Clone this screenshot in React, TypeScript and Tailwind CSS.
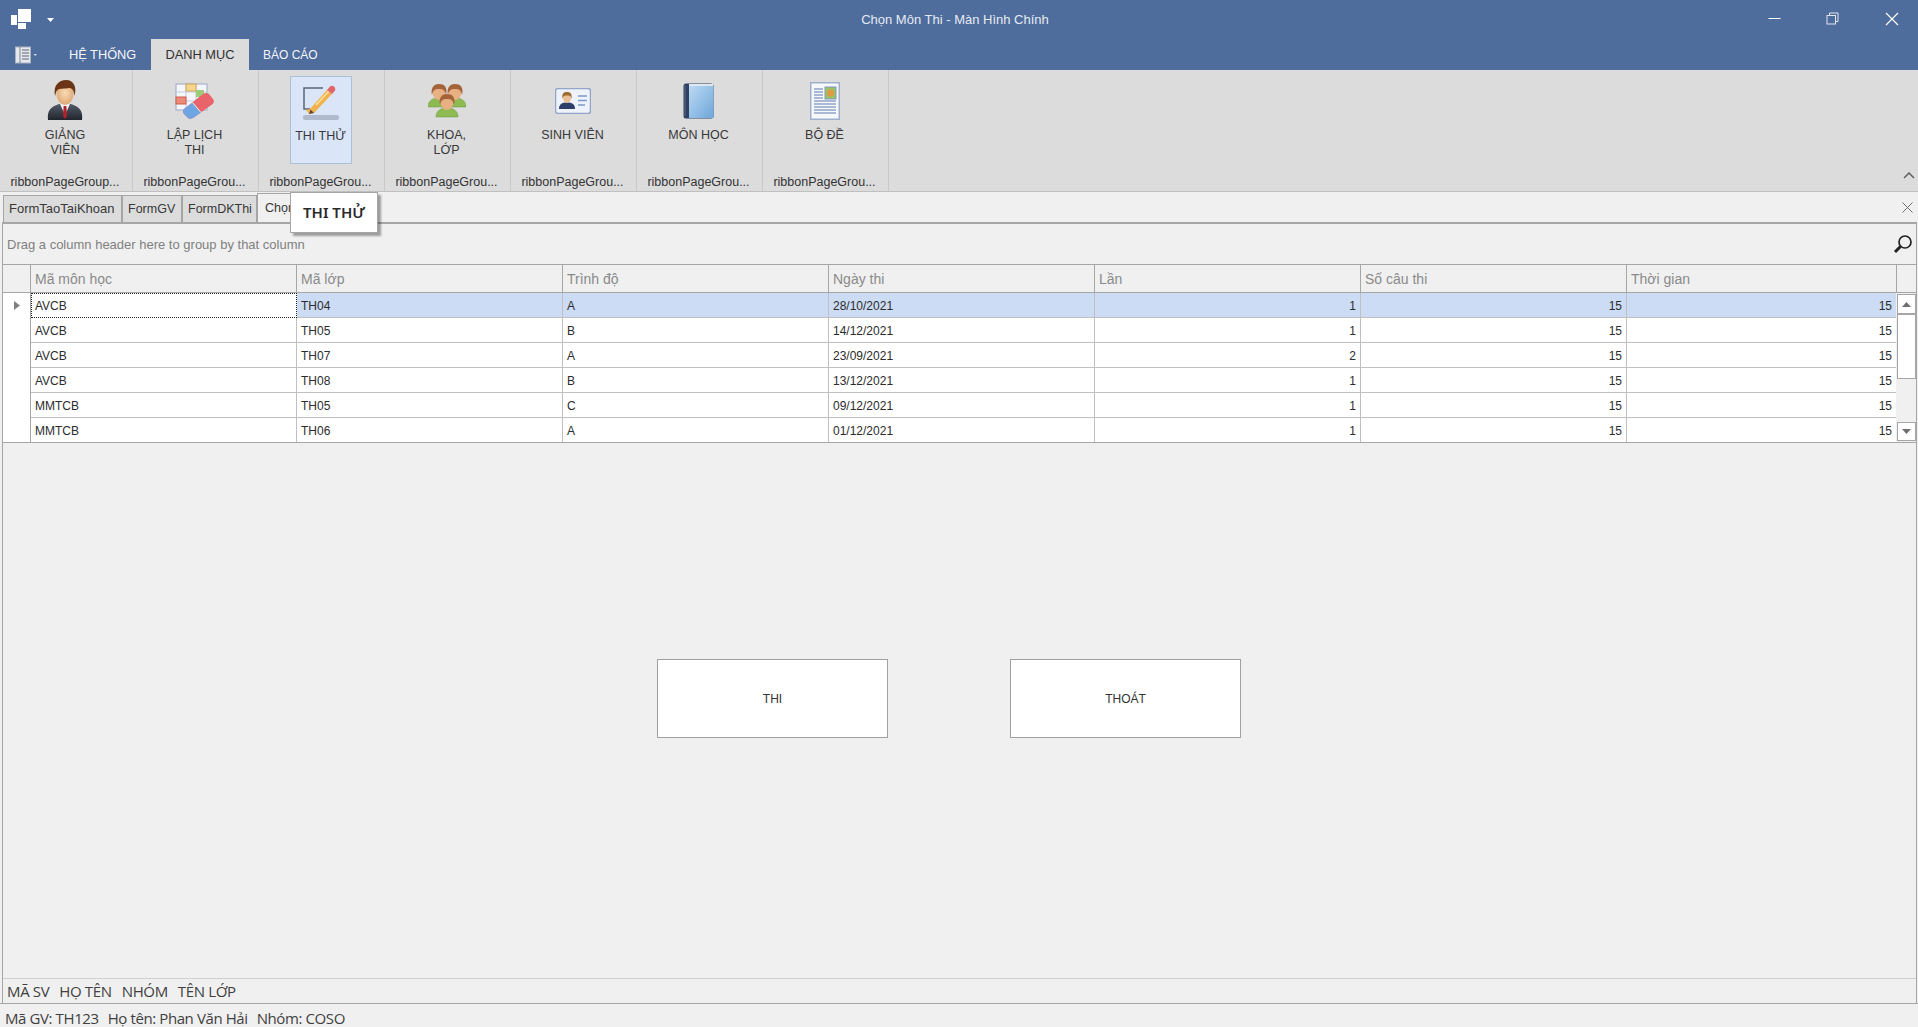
import { ReactNode } from "react";

const sans = "[font-family:'Liberation_Sans',sans-serif]";

const columns = ["Mã môn học", "Mã lớp", "Trình độ", "Ngày thi", "Lần", "Số câu thi", "Thời gian"];

const rows = [
  ["AVCB", "TH04", "A", "28/10/2021", "1", "15", "15"],
  ["AVCB", "TH05", "B", "14/12/2021", "1", "15", "15"],
  ["AVCB", "TH07", "A", "23/09/2021", "2", "15", "15"],
  ["AVCB", "TH08", "B", "13/12/2021", "1", "15", "15"],
  ["MMTCB", "TH05", "C", "09/12/2021", "1", "15", "15"],
  ["MMTCB", "TH06", "A", "01/12/2021", "1", "15", "15"],
];

function TeacherIcon() {
  return (
    <svg width="36" height="42" viewBox="0 0 36 42">
      <defs>
        <linearGradient id="suit" x1="0" y1="0" x2="0" y2="1">
          <stop offset="0" stopColor="#545c6a" />
          <stop offset="1" stopColor="#20242c" />
        </linearGradient>
        <radialGradient id="face" cx="0.5" cy="0.45" r="0.6">
          <stop offset="0" stopColor="#fbdcb4" />
          <stop offset="1" stopColor="#dba26e" />
        </radialGradient>
      </defs>
      <path d="M1 40 C0 31 3 27 12 24 L24 24 C33 27 36 31 35 40 Z" fill="url(#suit)" />
      <path d="M13 24 L18 35 L23 24 Z" fill="#f3f3f3" />
      <path d="M16.600 26 H19.400 L20 36 L18 39 L16 36 Z" fill="#b3202a" />
      <ellipse cx="18" cy="14" rx="8.500" ry="11" fill="url(#face)" />
      <path d="M8 16 C6 5 12 0 19 0 C27 0 30 7 27.500 16 C27 10 25 8 22 8 C18 9 12 8 10.500 10 C9 11 9 13 8 16 Z" fill="#6b3416" />
    </svg>
  );
}

function ScheduleIcon() {
  return (
    <svg width="40" height="36" viewBox="0 0 40 36">
      <rect x="1" y="1" width="31" height="26" fill="#f4f6fb" stroke="#9aa8c4" />
      <path d="M1 9 H32 M1 18 H32 M11 1 V27 M21 1 V27" stroke="#c3cde0" />
      <rect x="11" y="1" width="10" height="7" fill="#f6d58c" stroke="#d2a65a" />
      <rect x="1" y="14" width="10" height="7" fill="#ee8a78" stroke="#c9604f" />
      <rect x="21" y="7" width="8" height="7" fill="#9ccc7a" />
      <path d="M9 26 L28 11 C30 9.500 32 9.500 34 11 L38 16 C39.500 18 39 20 37 21.500 L18 35 C16 36 14 36 13 35 L9 31 C7.500 29 7.500 27.500 9 26 Z" fill="#e9646a" />
      <path d="M9 26 L17.500 19.500 L26 29.500 L18 35 C16 36 14 36 13 35 L9 31 C7.500 29 7.500 27.500 9 26 Z" fill="#6ea4e2" />
      <path d="M17.500 19.500 L26 29.500" stroke="#f2f2f2" strokeWidth="1" />
    </svg>
  );
}

function ExamIcon() {
  return (
    <svg width="38" height="38" viewBox="0 0 38 38">
      <path d="M21 5 H2 V26 H8" fill="none" stroke="#5d6675" strokeWidth="1.500" />
      <path d="M4 27 L8 26 L25 7 L30 11 L12 30 L7 31 Z" fill="#f2b34c" />
      <path d="M14 22 L27 8" stroke="#fbe0a0" strokeWidth="1.500" />
      <path d="M25 7 L28 3.500 C29 2.500 30.500 2.500 32 3.500 C33.500 5 33.500 6.500 33 7.500 L30 11 Z" fill="#e0646a" />
      <path d="M7 31 L8.500 26.500 L12 30 Z" fill="#5a4a3a" />
      <rect x="1" y="32" width="36" height="5" rx="2" fill="#a4afc0" opacity="0.8" />
    </svg>
  );
}

function GroupIcon() {
  const person = (x: number, y: number) => (
    <g transform={`translate(${x} ${y})`}>
      <path d="M0 23 C0 17 4 15 8 14 H14 C18 15 22 17 22 23 Z" fill="#8dbb52" stroke="#6f9a3c" strokeWidth="0.500" />
      <ellipse cx="11" cy="8" rx="6.500" ry="8" fill="#e7b183" />
      <path d="M4 11 C2 3 7 0 11 0 C16 0 20 3 18 11 C17 6 15 5 11 5 C7 5 5 6 4 11 Z" fill="#a5633a" />
    </g>
  );
  return (
    <svg width="38" height="34" viewBox="0 0 38 34">
      {person(0, 0)}
      {person(16, 0)}
      {person(8, 10)}
    </svg>
  );
}

function StudentIcon() {
  return (
    <svg width="36" height="26" viewBox="0 0 36 26">
      <rect x="0.500" y="0.500" width="35" height="25" rx="2.500" fill="#eef2fa" stroke="#93a6c9" strokeWidth="1.500" />
      <path d="M4 21 C4 16 7 15 10 14.500 H14 C17 15 20 16 20 21 Z" fill="#2d3f68" />
      <ellipse cx="12" cy="10" rx="4" ry="5" fill="#ecc096" />
      <path d="M7.500 11 C6.500 5 9 4 12 4 C15 4 17.500 5 16.500 11 C16 8 15 7.500 12 7.500 C9 7.500 8 8 7.500 11 Z" fill="#9d6b2e" />
      <path d="M23 8 H32 M23 12.500 H32 M23 17 H30" stroke="#7d9bc9" strokeWidth="1.500" />
    </svg>
  );
}

function BookIcon() {
  return (
    <svg width="32" height="36" viewBox="0 0 32 36">
      <defs>
        <linearGradient id="cover" x1="0" y1="0" x2="1" y2="1">
          <stop offset="0" stopColor="#bcdaf3" />
          <stop offset="1" stopColor="#6ea6da" />
        </linearGradient>
      </defs>
      <rect x="0.500" y="0.500" width="30" height="35" rx="2.500" fill="#2f4060" />
      <rect x="6" y="3" width="24.500" height="32" fill="url(#cover)" />
      <path d="M6 2 H30" stroke="#dfe7f1" strokeWidth="2" />
      <path d="M2 2 V33" stroke="#59698a" strokeWidth="1" />
    </svg>
  );
}

function ExamSetIcon() {
  return (
    <svg width="30" height="38" viewBox="0 0 30 38">
      <rect x="0.750" y="0.750" width="28.500" height="36.500" fill="#f6f8fc" stroke="#9fb0cc" strokeWidth="1.500" />
      <path d="M4 7 H13 M4 10 H13 M4 13 H13 M4 16 H13 M4 19 H26 M4 22 H26 M4 25 H26 M4 28 H26 M4 31 H26" stroke="#8fa3c7" strokeWidth="1.500" />
      <rect x="15" y="5" width="11" height="12" fill="#9ac267" stroke="#8398bb" />
      <circle cx="20.500" cy="11" r="3.500" fill="#e09a3f" />
    </svg>
  );
}

function RibbonGroup({
  icon,
  label,
  caption,
  active,
  width = "w-[126px]",
}: {
  icon: ReactNode;
  label: string[];
  caption: string;
  active?: boolean;
  width?: string;
}) {
  return (
    <div className={`flex ${width} shrink-0 flex-col border-r border-[#c8c8c8] pr-[2px]`}>
      <div className="flex flex-1 justify-center pt-[6px]">
        <div
          className={`flex h-[88px] w-[62px] flex-col items-center ${
            active ? "border border-[#aebfd8] bg-[#dae6f8]" : ""
          }`}
        >
          <div className="flex h-[46px] w-full items-center justify-center pt-[4px]">{icon}</div>
          <div className="mt-[6px] whitespace-nowrap text-center text-[12.5px] leading-[15px] text-[#383838]">
            {label.map((l) => (
              <div key={l}>{l}</div>
            ))}
          </div>
        </div>
      </div>
      <div className="h-[20px] whitespace-nowrap text-center text-[12.5px] leading-[22px] text-[#333]">{caption}</div>
    </div>
  );
}

function Tab({ label, active, width, size = "text-[12.500px]" }: { label: string; active?: boolean; width: string; size?: string }) {
  return (
    <div
      className={`flex ${width} ${size} items-center border-r border-t border-l border-[#a6a6a6] text-[#383838] ${
        active ? "h-[29px] bg-[#f0f0f0] pl-[7px]" : "h-[27px] bg-[#dcdcdc] pl-[5px]"
      }`}
    >
      {label}
    </div>
  );
}

export default function App() {
  return (
    <div className={`relative flex h-screen w-full flex-col overflow-hidden bg-[#f0f0f0] ${sans}`}>
      {/* title bar */}
      <div className="grid h-[39px] shrink-0 grid-cols-[1fr_auto_1fr] items-center bg-[#4e6c9c] text-white">
        <div className="flex items-center pl-[11px]">
          <svg width="21" height="21" viewBox="0 0 21 21">
            <path d="M7 0 H20 V13 H7 Z M0 6 H6 V16 H0 Z M7 14 H15 V20 H7 Z" fill="#fff" />
          </svg>
          <svg className="ml-[15px] mt-[1px]" width="7" height="4" viewBox="0 0 7 4">
            <path d="M0 0 H7 L3.500 4 Z" fill="#fff" />
          </svg>
        </div>
        <div className="mr-[8px] text-[13px] text-[#e6ebf3]">Chọn Môn Thi - Màn Hình Chính</div>
        <div className="flex items-center justify-end pb-[2px] pr-[19px]">
          <svg width="13" height="13" viewBox="0 0 13 13">
            <path d="M0.500 6.500 H12.500" stroke="#fff" strokeWidth="1" />
          </svg>
          <svg className="ml-[45px]" width="13" height="13" viewBox="0 0 13 13" fill="none" stroke="#dfe6f0">
            <rect x="1" y="3.500" width="8.500" height="8.500" />
            <path d="M3.500 3.500 V1 H12 V9.500 H9.500" />
          </svg>
          <svg className="ml-[46px]" width="14" height="14" viewBox="0 0 14 14">
            <path d="M1 1 L13 13 M13 1 L1 13" stroke="#fff" strokeWidth="1.200" />
          </svg>
        </div>
      </div>

      {/* ribbon tabs */}
      <div className="flex h-[31px] shrink-0 bg-[#4e6c9c] text-[#f4f6fa]">
        <div className="flex w-[69px] items-center pl-[15px]">
          <svg width="22" height="18" viewBox="0 0 22 18">
            <rect x="0.500" y="1" width="15" height="16" fill="#e6e8ec" stroke="#a9b2c0" />
            <path d="M5 1 V17" stroke="#7b8797" />
            <path d="M7 4 H14 M7 7 H14 M7 10 H14 M7 13 H14" stroke="#5b6778" />
            <path d="M18.500 8 H22 L20.200 10 Z" fill="#d8dee8" />
          </svg>
        </div>
        <div className="flex w-[82px] items-center pt-[1px] text-[12.800px]">HỆ THỐNG</div>
        <div className="flex w-[98px] items-center justify-center bg-[#dcdcdc] pt-[1px] text-[12.800px] text-[#303030]">DANH MỤC</div>
        <div className="flex items-center pl-[14px] text-[12px]">BÁO CÁO</div>
      </div>

      {/* ribbon body */}
      <div className="flex h-[122px] shrink-0 border-b border-[#c0c0c0] bg-[#dcdcdc]">
        <RibbonGroup icon={<TeacherIcon />} label={["GIẢNG", "VIÊN"]} caption="ribbonPageGroup..." width="w-[133px]" />
        <RibbonGroup icon={<ScheduleIcon />} label={["LẬP LỊCH", "THI"]} caption="ribbonPageGrou..." />
        <RibbonGroup icon={<ExamIcon />} label={["THI THỬ"]} caption="ribbonPageGrou..." active />
        <RibbonGroup icon={<GroupIcon />} label={["KHOA,", "LỚP"]} caption="ribbonPageGrou..." />
        <RibbonGroup icon={<StudentIcon />} label={["SINH VIÊN"]} caption="ribbonPageGrou..." />
        <RibbonGroup icon={<BookIcon />} label={["MÔN HỌC"]} caption="ribbonPageGrou..." />
        <RibbonGroup icon={<ExamSetIcon />} label={["BỘ ĐỀ"]} caption="ribbonPageGrou..." />
        <div className="flex flex-1 items-end justify-end pb-[12px] pr-[3px]">
          <svg width="12" height="7" viewBox="0 0 12 7" fill="none" stroke="#606060" strokeWidth="1.500">
            <path d="M1 6 L6 1 L11 6" />
          </svg>
        </div>
      </div>

      {/* document tabs */}
      <div className="flex h-[30px] shrink-0 items-end justify-between pl-[3px] pr-[5px]">
        <div className="flex items-end">
          <Tab label="FormTaoTaiKhoan" width="w-[119px]" size="text-[13px]" />
          <Tab label="FormGV" width="w-[60px]" />
          <Tab label="FormDKThi" width="w-[75px]" />
          <Tab label="Chọn Môn Thi" width="w-[100px]" active />
        </div>
        <svg className="mb-[9px]" width="11" height="11" viewBox="0 0 11 11">
          <path d="M0.500 0.500 L10.500 10.500 M10.500 0.500 L0.500 10.500" stroke="#707070" strokeWidth="1" />
        </svg>
      </div>

      {/* form */}
      <div className="ml-[2px] mr-[1px] flex min-h-0 flex-1 flex-col border-x border-t-2 border-[#a6a6a6]">
        <div className="flex h-[40px] shrink-0 items-center justify-between pl-[4px] pr-[3px] text-[13px] text-[#808080]">
          <span className="pt-[1px]">Drag a column header here to group by that column</span>
          <svg width="20" height="20" viewBox="0 0 20 20" fill="none" stroke="#222">
            <circle cx="12" cy="8" r="6" strokeWidth="1.700" />
            <path d="M7.500 12.500 L2 18" strokeWidth="3" />
          </svg>
        </div>

        <div className="flex shrink-0 border-y border-[#a6a6a6]">
          <div className="min-w-0 flex-1">
            <div className="grid h-[28px] grid-cols-[28px_266px_266px_266px_266px_266px_266px_1fr] border-b border-[#a6a6a6] text-[#8a8a8a]">
              <div className="border-r border-[#a6a6a6]" />
              {columns.map((c, i) => (
                <div
                  key={c}
                  className={`flex items-center pl-[4px] pt-[1px] text-[14px] ${i < columns.length - 1 ? "border-r border-[#a6a6a6]" : ""}`}
                >
                  {c}
                </div>
              ))}
            </div>
            {rows.map((row, i) => (
              <div
                key={i}
                className={`grid grid-cols-[28px_266px_266px_266px_266px_266px_266px_1fr] text-[#2c2c2c] ${
                  i < rows.length - 1 ? "h-[25px]" : "h-[24px]"
                }`}
              >
                <div className="flex items-center border-r border-[#a6a6a6] bg-white pl-[11px]">
                  {i === 0 && (
                    <svg width="6" height="9" viewBox="0 0 6 9">
                      <path d="M0 0 L6 4.500 L0 9 Z" fill="#808080" />
                    </svg>
                  )}
                </div>
                {row.map((cell, j) => (
                  <div
                    key={j}
                    className={`flex items-center pt-[1px] text-[12px] ${
                      i === 0 && j === 0
                        ? "border border-dotted border-[#222] bg-white px-[3px]"
                        : `px-[4px] ${j < row.length - 1 ? "border-r" : ""} ${i < rows.length - 1 ? "border-b" : ""} border-[#c0c0c0] ${i === 0 ? "bg-[#cddcf5]" : "bg-white"}`
                    } ${j > 3 ? "justify-end" : ""}`}
                  >
                    {cell}
                  </div>
                ))}
              </div>
            ))}
          </div>
          <div className="flex w-[20px] shrink-0 flex-col">
            <div className="h-[28px] border-b border-l border-[#a6a6a6]" />
            <div className="flex flex-1 flex-col py-[1px] pl-[1px]">
              <div className="flex h-[20px] shrink-0 items-center justify-center border border-[#a6a6a6] bg-white">
                <svg width="9" height="5" viewBox="0 0 9 5">
                  <path d="M0 5 L4.500 0 L9 5 Z" fill="#707070" />
                </svg>
              </div>
              <div className="h-[65px] shrink-0 border border-[#a6a6a6] bg-white" />
              <div className="flex-1" />
              <div className="flex h-[19px] shrink-0 items-center justify-center border border-[#a6a6a6] bg-white">
                <svg width="9" height="5" viewBox="0 0 9 5">
                  <path d="M0 0 L4.500 5 L9 0 Z" fill="#707070" />
                </svg>
              </div>
            </div>
          </div>
        </div>

        <div className="flex flex-1 items-start gap-[122px] pl-[654px] pt-[216px] text-[12px] text-[#333]">
          <button className="flex h-[79px] w-[231px] items-center justify-center border border-[#a0a0a0] bg-white">THI</button>
          <button className="flex h-[79px] w-[231px] items-center justify-center border border-[#a0a0a0] bg-white">THOÁT</button>
        </div>

        <div className="flex h-[25px] shrink-0 items-center gap-[10px] border-t border-[#d0d0d0] pl-[4px] pt-[1px] font-['Open_Sans'] text-[15px] tracking-[-0.35px] text-[#404040]">
          <span>MÃ SV</span>
          <span>HỌ TÊN</span>
          <span>NHÓM</span>
          <span>TÊN LỚP</span>
        </div>
      </div>

      {/* status bar */}
      <div className="flex h-[24px] shrink-0 items-center gap-[9px] border-t border-[#a6a6a6] pl-[5px] pt-[6px] font-['Open_Sans'] text-[15px] tracking-[-0.4px] text-[#404040]">
        <span>Mã GV: TH123</span>
        <span>Họ tên: Phan Văn Hải</span>
        <span>Nhóm: COSO</span>
      </div>

      {/* tooltip over THI THỬ */}
      <div className="absolute left-[290px] top-[192px] flex h-[41px] w-[88px] items-center justify-center border border-[#a6a6a6] bg-white pb-[1px] font-['Noto_Sans'] text-[15px] font-semibold text-[#2a2a2a] shadow-[3px_3px_2px_rgba(0,0,0,0.35)]">
        THI THỬ
      </div>
    </div>
  );
}
